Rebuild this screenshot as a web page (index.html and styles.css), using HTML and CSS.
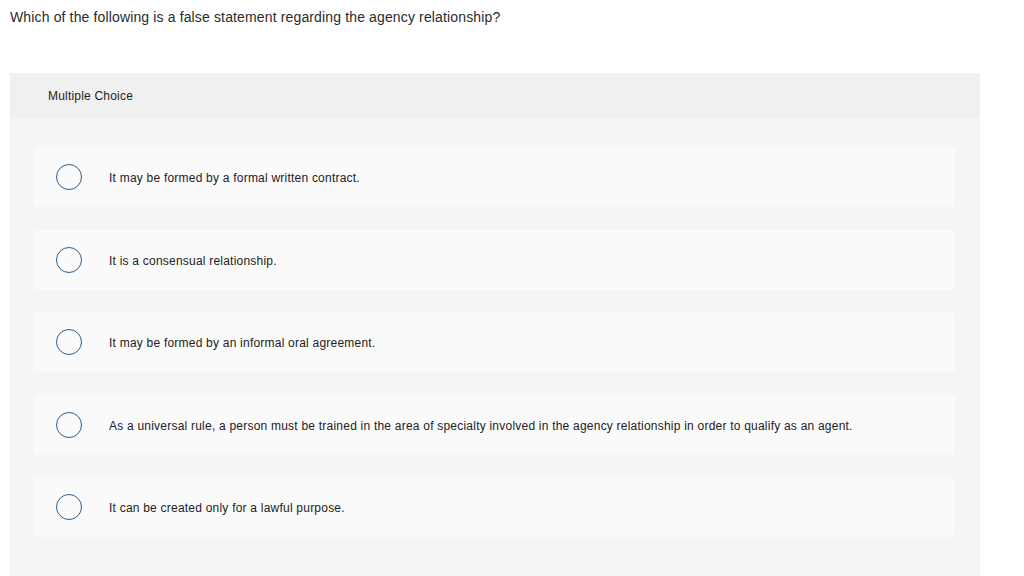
FILE: index.html
```html
<!DOCTYPE html>
<html>
<head>
<meta charset="utf-8">
<link rel="stylesheet" href="styles.css">
</head>
<body>
<div class="question">Which of the following is a false statement regarding the agency relationship?</div>
<div class="panel">
  <div class="panel-head">Multiple Choice</div>
  <div class="panel-body">
    <div class="option"><span class="radio"></span><span class="label">It may be formed by a formal written contract.</span></div>
    <div class="option"><span class="radio"></span><span class="label">It is a consensual relationship.</span></div>
    <div class="option"><span class="radio"></span><span class="label">It may be formed by an informal oral agreement.</span></div>
    <div class="option"><span class="radio"></span><span class="label">As a universal rule, a person must be trained in the area of specialty involved in the agency relationship in order to qualify as an agent.</span></div>
    <div class="option"><span class="radio"></span><span class="label">It can be created only for a lawful purpose.</span></div>
  </div>
</div>
</body>
</html>
```

FILE: styles.css
```css
html, body {
  margin: 0;
  padding: 0;
  background: #ffffff;
  font-family: "Liberation Sans", Arial, sans-serif;
  color: #333333;
}
.question {
  padding: 8px 10px 0 10px;
  font-size: 14px;
  letter-spacing: 0.14px;
  line-height: 18px;
  height: 65px;
  color: #2b2b2b;
}
.panel {
  margin-left: 10px;
  width: 970px;
  background: #f5f5f5;
  height: 520px;
}
.panel-head {
  height: 45px;
  background: #f0f0f0;
  display: flex;
  align-items: center;
  padding-left: 38px;
  font-size: 12px;
  letter-spacing: 0.2px;
  color: #222;
}
.panel-body {
  padding: 29px 25px 0 23px;
  display: flex;
  flex-direction: column;
  gap: 22.5px;
}
.option {
  height: 60px;
  background: #fafafa;
  border-radius: 4px;
  display: flex;
  align-items: center;
  padding-left: 23px;
}
.radio {
  width: 24px;
  height: 24px;
  border: 1.3px solid #2d5d8f;
  border-radius: 50%;
  box-sizing: content-box;
  flex: none;
}
.label {
  margin-left: 27px;
  padding-top: 2px;
  font-size: 12px;
  letter-spacing: 0.22px;
  color: #222;
}
```
